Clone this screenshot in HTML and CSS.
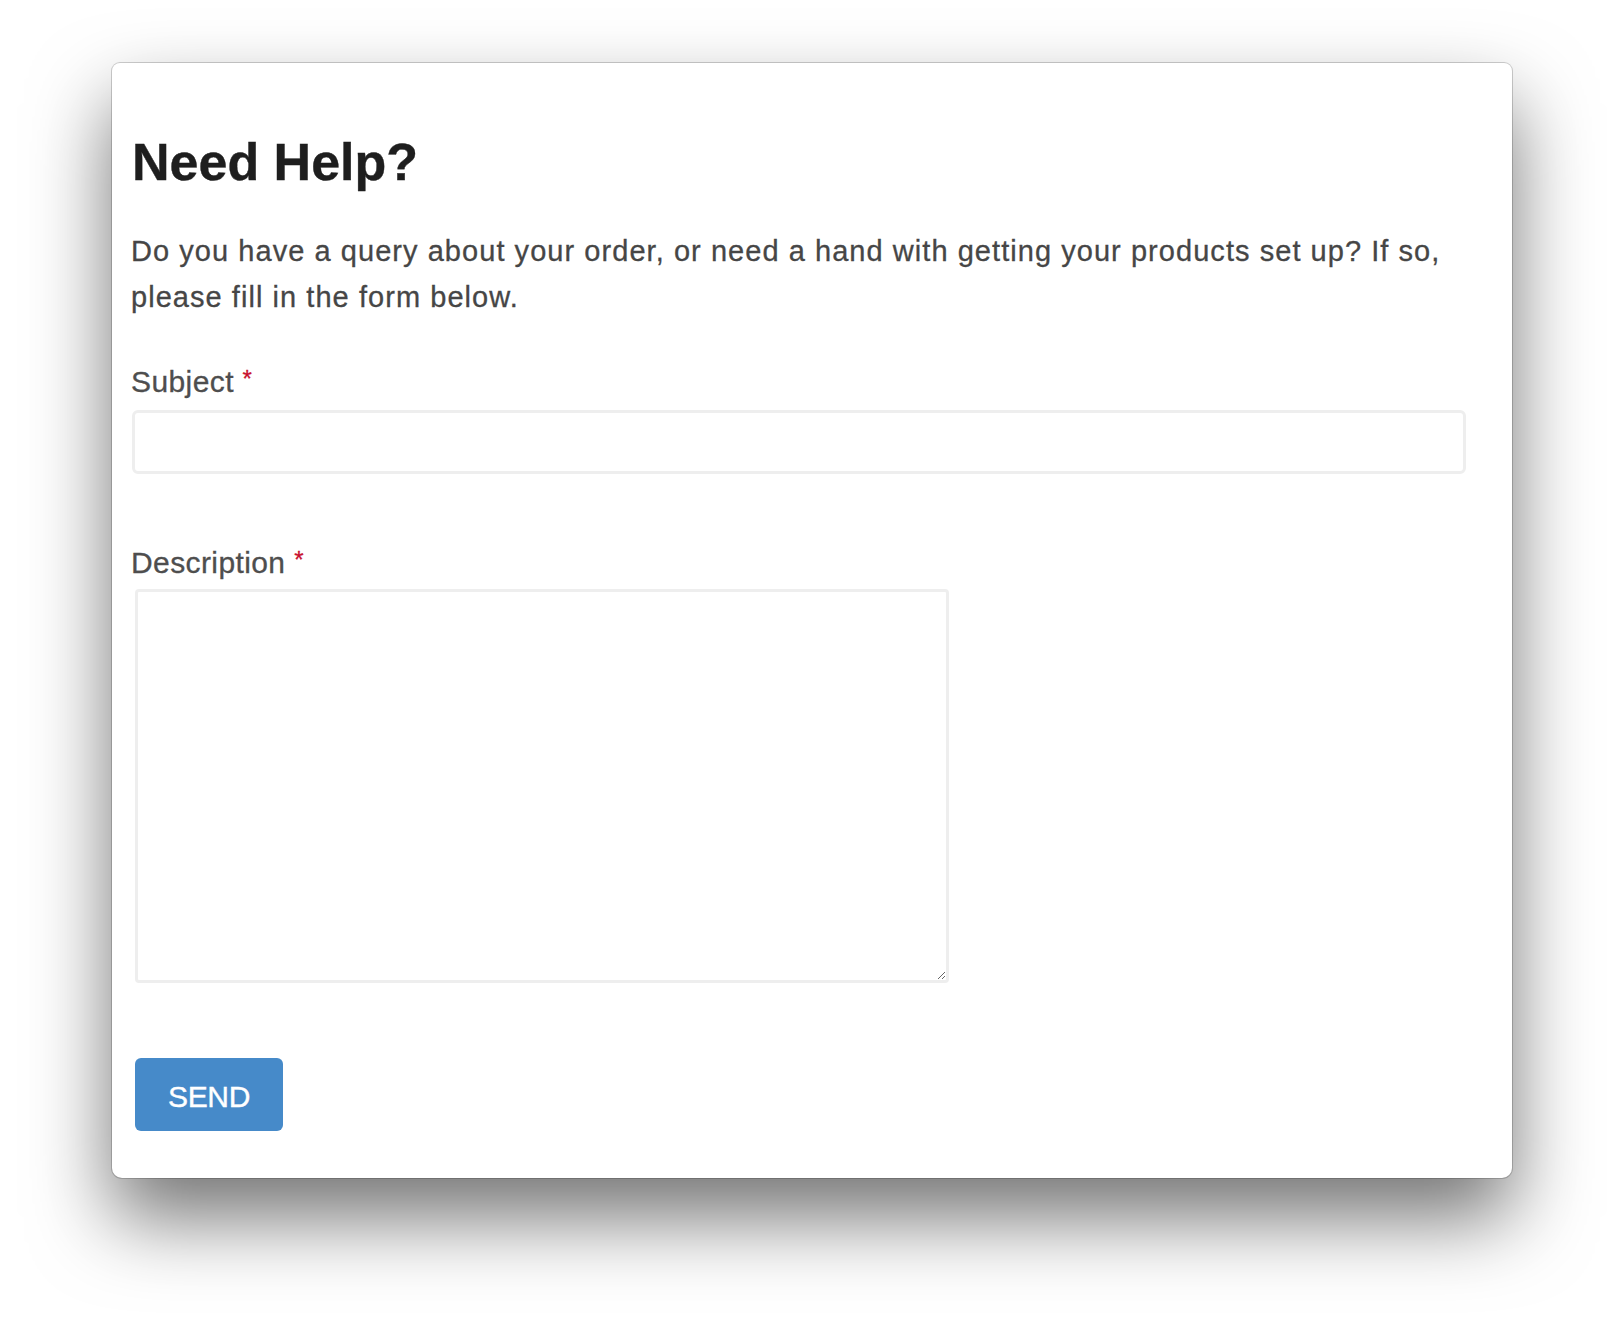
FILE: index.html
```html
<!DOCTYPE html>
<html lang="en">
<head>
<meta charset="utf-8">
<title>Need Help?</title>
<link rel="stylesheet" href="styles.css">
</head>
<body>
<div class="window">
  <div class="content">
    <h1 class="title">Need Help?</h1>
    <p class="intro">Do you have a query about your order, or need a hand with getting your products set up? If so, please fill in the form below.</p>
    <form class="form">
      <div class="field">
        <label class="label" for="subject">Subject <span class="req">*</span></label>
        <input class="input" id="subject" type="text">
      </div>
      <div class="field field-desc">
        <label class="label" for="desc">Description <span class="req">*</span></label>
        <textarea class="textarea" id="desc"></textarea>
      </div>
      <button class="send" type="button">SEND</button>
    </form>
  </div>
</div>
</body>
</html>
```
FILE: styles.css
```css
html, body {
  margin: 0;
  padding: 0;
  background: #ffffff;
}
body {
  width: 1624px;
  height: 1338px;
  overflow: hidden;
  font-family: "Liberation Sans", Arial, Helvetica, sans-serif;
}
.window {
  margin: 63px 0 0 112px;
  width: 1400px;
  height: 1115px;
  box-sizing: border-box;
  background: #ffffff;
  border-radius: 8px 8px 10px 10px;
  box-shadow: 0 40px 80px rgba(0, 0, 0, 0.55), 0 0 0 1px rgba(0, 0, 0, 0.18);
}
.content {
  padding: 69px 0 0 20px;
  width: 1354px;
}
.title {
  margin: 0;
  font-size: 52px;
  line-height: 60px;
  font-weight: 700;
  color: #1e1e1e;
  -webkit-text-stroke: 0.4px #1e1e1e;
}
.intro {
  margin: 36px 0 0 -1px;
  font-size: 29px;
  letter-spacing: 1.05px;
  line-height: 46px;
  color: #464646;
  -webkit-text-stroke: 0.3px #464646;
}
.form {
  margin: 44px 0 0 0;
  display: flex;
  flex-direction: column;
  align-items: flex-start;
}
.field {
  display: flex;
  flex-direction: column;
  align-items: flex-start;
  width: 100%;
}
.field-desc {
  margin-top: 71px;
}
.label {
  font-size: 30px;
  letter-spacing: 0.4px;
  line-height: 36px;
  color: #4e4e4e;
  margin-left: -1px;
  -webkit-text-stroke: 0.3px #4e4e4e;
}
.req {
  color: #c8102e;
  -webkit-text-stroke: 0.3px #c8102e;
  font-size: 24px;
  vertical-align: top;
  line-height: 30px;
}
.input {
  margin-top: 10px;
  width: 1334px;
  height: 64px;
  box-sizing: border-box;
  border: 3px solid #eeeeee;
  border-radius: 6px;
  background: #ffffff;
  outline: none;
  font-size: 28px;
}
.textarea {
  margin: 8px 0 0 3px;
  width: 814px;
  height: 394px;
  box-sizing: border-box;
  border: 3px solid #eeeeee;
  border-radius: 4px;
  background: #ffffff;
  outline: none;
  font-size: 28px;
}
.send {
  margin: 75px 0 0 3px;
  width: 148px;
  height: 73px;
  border: none;
  border-radius: 6px;
  background: #468ac9;
  color: #ffffff;
  font-family: "Liberation Sans", Arial, Helvetica, sans-serif;
  font-size: 30px;
  letter-spacing: -0.3px;
  -webkit-text-stroke: 0.4px #ffffff;
  padding: 4px 0 0 0;
}
```
